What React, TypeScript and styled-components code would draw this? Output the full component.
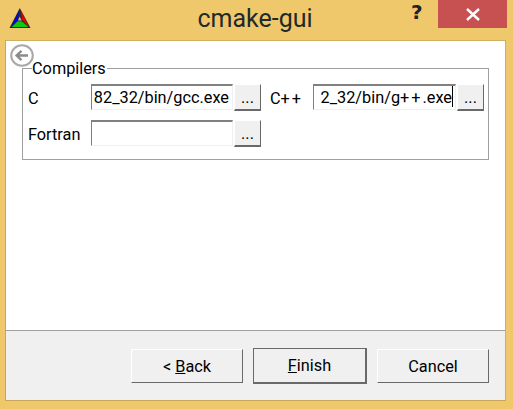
import { createGlobalStyle, styled } from 'styled-components'

const GlobalStyle = createGlobalStyle`
  html, body {
    margin: 0;
    padding: 0;
    background: #f0c86c;
  }
`

const Frame = styled('div')`
  width: 513px;
  height: 409px;
  background: #f0c86c;
  display: flex;
  flex-direction: column;
  font-family: Roboto, "Open Sans", "Liberation Sans", sans-serif;
  color: #000;
  overflow: hidden;
`

const TitleBar = styled('header')`
  position: relative;
  flex: none;
  height: 40px;
  padding-right: 3px;
  box-sizing: border-box;
  display: flex;
  justify-content: center;
  align-items: flex-start;
`

const Title = styled('div')`
  font-size: 25px;
  line-height: 30px;
  margin-top: 4px;
  color: #1f2a2a;
`

const Logo = styled('svg')`
  position: absolute;
  left: 9px;
  top: 7px;
`

const HelpMark = styled('div')`
  position: absolute;
  left: 411px;
  top: 1px;
  font-family: "DejaVu Sans", sans-serif;
  font-size: 20px;
  font-weight: 700;
  line-height: 22px;
  color: #222;
`

const CloseButton = styled('div')`
  position: absolute;
  left: 438px;
  top: 0;
  width: 69px;
  height: 28px;
  background: #c75050;
  display: flex;
  align-items: center;
  justify-content: center;
`

const Client = styled('main')`
  flex: none;
  width: 501px;
  height: 361px;
  margin-left: 5px;
  border-top: 1px solid #d0b060;
  border-left: 1px solid #c9a75a;
  border-right: 1px solid #d0b060;
  border-bottom: 1px solid #c9a75a;
  box-sizing: border-box;
  display: flex;
  flex-direction: column;
  background: #fff;
`

const Page = styled('section')`
  position: relative;
  flex: 1;
  padding: 27px 16px 0 16px;
`

const BackIcon = styled('svg')`
  position: absolute;
  left: 4px;
  top: 3px;
`

const Group = styled('div')`
  position: relative;
  width: 467px;
  height: 92px;
  box-sizing: border-box;
  border: 1px solid #a0a0a0;
  padding: 15px 4px 0 5px;
  display: flex;
  flex-direction: column;
  gap: 9px;
`

const GroupTitle = styled('div')`
  position: absolute;
  left: 9px;
  top: -10px;
  padding-right: 1px;
  background: #fff;
  font-size: 16.3px;
  line-height: 20px;
`

const Row = styled('div')`
  display: flex;
  align-items: flex-start;
  height: 27px;
`

const Label = styled('div')<{ $width: number }>`
  width: ${({ $width }) => $width}px;
  flex: none;
  padding-top: 2px;
  font-size: 16.3px;
  line-height: 26px;
`

const Field = styled('div')<{ $width?: number }>`
  width: ${({ $width }) => $width ?? 142}px;
  height: 26px;
  flex: none;
  box-sizing: border-box;
  border-top: 2px solid #808080;
  border-left: 1px solid #808080;
  border-right: 1px solid #f0f0f0;
  border-bottom: 1px solid #f0f0f0;
  background: #fff;
  display: flex;
  justify-content: flex-end;
  overflow: hidden;
  white-space: nowrap;
  font-size: 16.3px;
  line-height: 24px;
  padding-right: 3px;
`

const Plus = styled('span')`
  letter-spacing: 2px;
`

const Caret = styled('span')`
  flex: none;
  width: 1px;
  height: 21px;
  margin-right: -1px;
  background: #000;
`

const BrowseButton = styled('div')`
  width: 27px;
  height: 27px;
  flex: none;
  margin-left: 1px;
  box-sizing: border-box;
  background: #f0f0f0;
  border-top: 1px solid #fff;
  border-left: 1px solid #fff;
  border-right: 1px solid #696969;
  border-bottom: 2px solid #696969;
  text-align: center;
  font-size: 16.3px;
  line-height: 26px;
`

const Gap = styled('div')`
  width: 9px;
  flex: none;
`

const Footer = styled('footer')`
  flex: none;
  height: 70px;
  box-sizing: border-box;
  border-top: 1px solid #a0a0a0;
  background: #f0f0f0;
  padding-right: 16px;
  display: flex;
  justify-content: flex-end;
  align-items: center;
  gap: 10px;
`

const WizardButton = styled('div')<{ $isDefault?: boolean }>`
  width: ${({ $isDefault }) => ($isDefault ? 114 : 112)}px;
  height: ${({ $isDefault }) => ($isDefault ? 36 : 34)}px;
  box-sizing: border-box;
  background: #f0f0f0;
  border-style: solid;
  border-width: ${({ $isDefault }) => ($isDefault ? '1px 2px 2px 1px' : '1px')};
  border-color: ${({ $isDefault }) =>
    $isDefault ? '#696969' : '#fff #696969 #696969 #fff'};
  padding-top: 2px;
  display: flex;
  align-items: center;
  justify-content: center;
  font-size: 16.3px;
  line-height: 20px;
  white-space: pre;
`

export default function App() {
  return (
    <Frame>
      <GlobalStyle />
      <TitleBar>
        <Logo width="22" height="22" viewBox="0 0 22 22">
          <path d="M10.8 1 L0.5 21 H21.5 Z" fill="#2a2a2a" />
          <path d="M10.4 3 L2.4 19.4 L8.6 13.2 Z" fill="#0000e6" />
          <path d="M11.6 3 L20 20 L13.2 13 Z" fill="#e60000" />
          <path d="M2.8 20 H19.4 L13 14.4 L8.8 14.2 Z" fill="#10c810" />
          <path d="M10.6 9.6 L12.8 13.4 L9 13.6 Z" fill="#b4b4b4" />
        </Logo>
        <Title>cmake-gui</Title>
        <HelpMark>?</HelpMark>
        <CloseButton>
          <svg width="14" height="13" viewBox="0 0 14 13">
            <path d="M1 1 L13 12 M13 1 L1 12" stroke="#fff" strokeWidth="2.4" fill="none" />
          </svg>
        </CloseButton>
      </TitleBar>
      <Client>
        <Page>
          <Group>
            <GroupTitle>Compilers</GroupTitle>
            <Row>
              <Label $width={63}>C</Label>
              <Field>82_32/bin/gcc.exe</Field>
              <BrowseButton>...</BrowseButton>
              <Gap />
              <Label $width={43}>
                C<Plus>++</Plus>
              </Label>
              <Field $width={143}>
                2_32/bin/g<Plus>++</Plus>.exe
                <Caret />
              </Field>
              <BrowseButton>...</BrowseButton>
            </Row>
            <Row>
              <Label $width={63}>Fortran</Label>
              <Field />
              <BrowseButton>...</BrowseButton>
            </Row>
          </Group>
          <BackIcon width="24" height="23" viewBox="0 0 24 23">
            <ellipse cx="12" cy="11.5" rx="10.8" ry="10.3" fill="#fff" stroke="#a8a8a8" strokeWidth="2" />
            <path d="M18 11.5 H7 M11.5 6.8 L6.6 11.5 L11.5 16.2" fill="none" stroke="#8c8c8c" strokeWidth="2.4" />
          </BackIcon>
        </Page>
        <Footer>
          <WizardButton>
            {'< '}
            <u>B</u>ack
          </WizardButton>
          <WizardButton $isDefault>
            <u>F</u>inish
          </WizardButton>
          <WizardButton>Cancel</WizardButton>
        </Footer>
      </Client>
    </Frame>
  )
}
